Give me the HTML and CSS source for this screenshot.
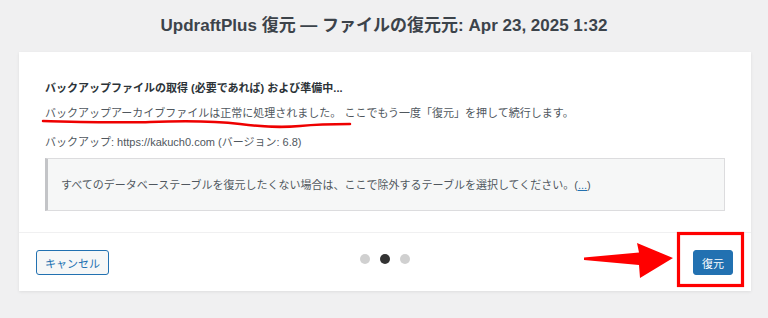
FILE: index.html
```html
<!DOCTYPE html>
<html lang="ja">
<head>
    <meta charset="UTF-8">
    <title>UpdraftPlus 復元</title>
    <link rel="stylesheet" href="styles.css">
</head>
<body>
    <h1 class="page-title">UpdraftPlus 復元 — ファイルの復元元: Apr 23, 2025 1:32</h1>

    <div class="card">
        <div class="card-body">
            <h3 class="step-title">バックアップファイルの取得 (必要であれば) および準備中...</h3>
            <p class="step-text">バックアップアーカイブファイルは正常に処理されました。 ここでもう一度「復元」を押して続行します。</p>
            <p class="step-text info">バックアップ: https://kakuch0.com (バージョン: 6.8)</p>
            <div class="notice">
                すべてのデータベーステーブルを復元したくない場合は、ここで除外するテーブルを選択してください。(<a href="#">...</a>)
            </div>
        </div>
        <div class="card-footer">
            <div class="footer-left">
                <button class="btn btn-secondary">キャンセル</button>
            </div>
            <div class="steps">
                <span class="dot"></span>
                <span class="dot active"></span>
                <span class="dot"></span>
            </div>
            <div class="footer-right">
                <button class="btn btn-primary">復元</button>
            </div>
        </div>
    </div>

    <!-- 注釈 (赤線・矢印・枠) -->
    <svg class="annotations" width="768" height="318" viewBox="0 0 768 318">
        <path d="M43 121 C 90 122, 125 123, 150 122 S 215 121, 240 124 S 280 128, 300 126 S 335 124, 350 124"
              fill="none" stroke="#ee0000" stroke-width="2.5" stroke-linecap="round"/>
        <polygon points="584,257.5 639,252.5 637,243 673,258 640,278 639,265 584,260" fill="#ff0000"/>
        <rect x="678.5" y="233.5" width="64" height="52" fill="none" stroke="#ff0000" stroke-width="3.2"/>
    </svg>
</body>
</html>
```

FILE: styles.css
```css
* { box-sizing: border-box; }
body {
    margin: 0;
    width: 768px;
    height: 318px;
    background: #f0f0f1;
    font-family: "Liberation Sans", "Noto Sans CJK JP", sans-serif;
    color: #50575e;
    position: relative;
    overflow: hidden;
}
.page-title {
    margin: 0;
    padding-top: 15px;
    height: 52px;
    text-align: center;
    font-size: 17px;
    line-height: 22px;
    font-weight: bold;
    color: #3c434a;
}
.card {
    margin: 0 17px 0 19px;
    background: #fff;
    box-shadow: 0 1px 3px rgba(0,0,0,0.08);
}
.card-body {
    padding: 28px 26px 21px;
}
.step-title {
    margin: 0;
    font-size: 11px;
    line-height: 16px;
    font-weight: bold;
    color: #2c3338;
}
.step-text {
    margin: 9px 0 0;
    font-size: 11px;
    line-height: 16px;
}
.step-text.info {
    margin-top: 13px;
}
.notice {
    margin-top: 8px;
    background: #f6f7f7;
    border: 1px solid #dcdcde;
    border-left: 3px solid #c3c4c7;
    padding: 18px 13px 17px;
    font-size: 11px;
    line-height: 16px;
}
.notice a {
    color: #2271b1;
}
.card-footer {
    border-top: 1px solid #f0f0f1;
    padding: 17px 18px 16px 17px;
    display: grid;
    grid-template-columns: 1fr auto 1fr;
    align-items: center;
}
.footer-right {
    display: flex;
    justify-content: flex-end;
}
.steps {
    display: flex;
    gap: 10px;
    margin-bottom: 8px;
}
.dot {
    width: 10px;
    height: 10px;
    border-radius: 50%;
    background: #d0d0d0;
}
.dot.active {
    background: #333;
}
.btn {
    height: 25px;
    padding: 0 8px;
    font-family: inherit;
    font-size: 11px;
    border-radius: 3px;
    cursor: pointer;
}
.btn-secondary {
    background: #f6f7f7;
    color: #2271b1;
    border: 1px solid #2271b1;
}
.btn-primary {
    background: #2271b1;
    color: #fff;
    border: 1px solid #2271b1;
}
.annotations {
    position: absolute;
    top: 0;
    left: 0;
    pointer-events: none;
}
```
